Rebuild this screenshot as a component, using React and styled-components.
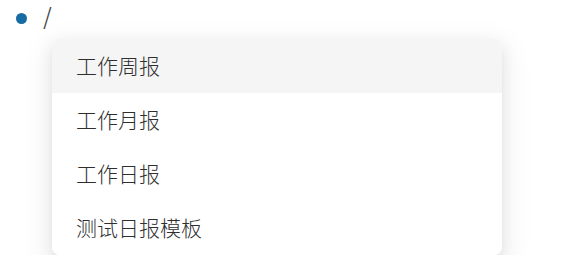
import React from "react";
import styled, { createGlobalStyle } from "styled-components";

const Global = createGlobalStyle`
  html, body { margin: 0; padding: 0; background: #fff; }
  body { font-family: "Noto Sans CJK SC", "Noto Sans", sans-serif; }
`;

const Page = styled.div`
  display: flex;
  flex-direction: column;
  padding: 0 0 0 16px;
`;

const Line = styled.div`
  display: flex;
  align-items: center;
  height: 36px;
  gap: 16px;
`;

const Bullet = styled.span`
  width: 11px;
  height: 11px;
  border-radius: 50%;
  background: #166ba5;
  flex: none;
`;

const Slash = styled.span`
  font-family: "DejaVu Sans", "Noto Sans", sans-serif;
  font-size: 26px;
  font-weight: 300;
  line-height: 36px;
  color: #444;
`;

const Menu = styled.ul`
  list-style: none;
  margin: 3px 0 0 36px;
  padding: 0;
  width: 450px;
  background: #fff;
  border-radius: 8px;
  overflow: hidden;
  box-shadow: 0 6px 16px 0 rgba(0, 0, 0, 0.08), 0 3px 6px -4px rgba(0, 0, 0, 0.12),
    0 9px 28px 8px rgba(0, 0, 0, 0.05);
`;

const Item = styled.li`
  height: 54px;
  display: flex;
  align-items: center;
  padding: 0 24px 3px;
  box-sizing: border-box;
  font-size: 21px;
  font-weight: 300;
  color: #2f2f2f;
  background: ${(p) => (p.$active ? "#f5f5f5" : "#fff")};
`;

const items = ["工作周报", "工作月报", "工作日报", "测试日报模板"];

export default function App() {
  return (
    <>
      <Global />
      <Page>
        <Line>
          <Bullet />
          <Slash>/</Slash>
        </Line>
        <Menu>
          {items.map((t, i) => (
            <Item key={t} $active={i === 0}>
              {t}
            </Item>
          ))}
        </Menu>
      </Page>
    </>
  );
}
